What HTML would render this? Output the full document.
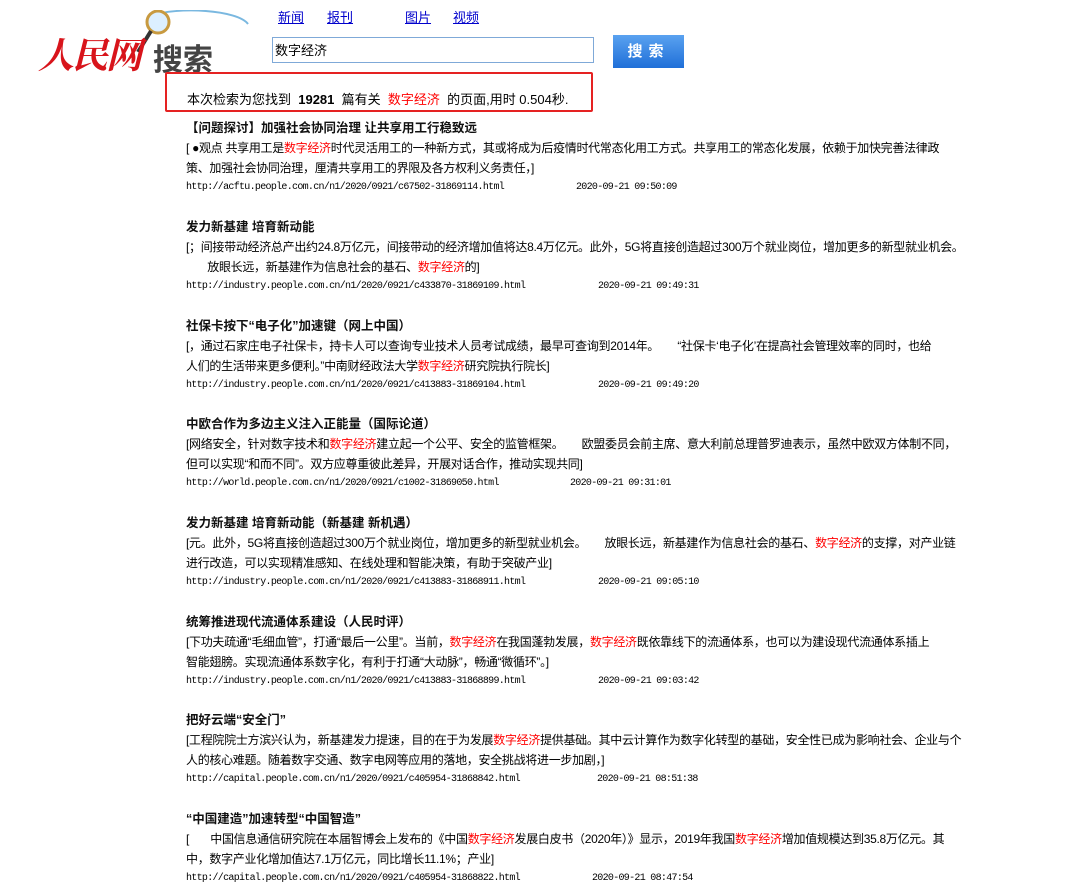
<!DOCTYPE html>
<html><head><meta charset="utf-8"><style>
*{margin:0;padding:0}
body{width:1080px;height:895px;background:#fff;position:relative;overflow:hidden;font-family:"Liberation Sans","Noto Sans CJK SC",sans-serif;font-size:12px;color:#000}
.a{position:absolute}
.nav a{color:#00c;text-decoration:underline;font-size:13px;position:absolute;top:7px}
.it{position:absolute;left:186px;width:800px}
.t{font-weight:bold;font-size:12.5px;line-height:16px;color:#111;height:18px}
.d{line-height:20px;font-size:12px;white-space:nowrap;letter-spacing:-0.3px}
.r{color:#f00}
.u{font-family:"Liberation Mono",monospace;font-size:10px;letter-spacing:-0.7px;line-height:20px;position:relative;white-space:nowrap}
.u span{position:absolute;top:0}
</style></head><body>
<div class="a" style="left:38px;top:10px;width:212px;height:65px">
<svg width="212" height="65" viewBox="0 0 212 65">
<path d="M112 6 C140 -4 200 0 210 14" stroke="#7ab8e0" stroke-width="2" fill="none"/>
<circle cx="120" cy="12" r="11" fill="#dcefff" stroke="#c89a40" stroke-width="3"/>
<line x1="113" y1="21" x2="100" y2="42" stroke="#333" stroke-width="4"/>
<text x="0" y="58" font-family="Liberation Serif,Noto Serif CJK SC,serif" font-size="36" font-style="italic" font-weight="bold" fill="#d8141b" textLength="104">人民网</text>
<text x="115" y="60" font-family="Liberation Sans,Noto Sans CJK SC,sans-serif" font-size="30" font-weight="bold" fill="#444">搜索</text>
</svg></div>
<div class="nav"><a style="left:278px">新闻</a><a style="left:327px">报刊</a><a style="left:405px">图片</a><a style="left:453px">视频</a></div>
<div class="a" style="left:272px;top:37px;width:322px;height:26px;border:1px solid #7fa9d8;font-size:13px;line-height:26px;padding-left:2px;box-sizing:border-box">数字经济</div>
<div class="a" style="left:613px;top:35px;width:71px;height:33px;background:linear-gradient(#5aa2f0,#1f6fd8);color:#fff;font-size:15px;font-weight:bold;text-align:center;line-height:33px;letter-spacing:6px">搜索</div>
<div class="a" style="left:165px;top:72px;width:428px;height:40px;border:2px solid #e52222;border-radius:2px;box-sizing:border-box"></div>
<div class="a" style="left:187px;top:89px;font-size:13px;white-space:nowrap">本次检索为您找到 &nbsp;<b>19281</b>&nbsp; 篇有关 &nbsp;<span class="r">数字经济</span>&nbsp; 的页面,用时 0.504秒.</div>

<div class="it" style="top:120px"><div class="t">【问题探讨】加强社会协同治理 让共享用工行稳致远</div>
<div class="d">[ ●观点 共享用工是<span class="r">数字经济</span>时代灵活用工的一种新方式，其或将成为后疫情时代常态化用工方式。共享用工的常态化发展，依赖于加快完善法律政<br>策、加强社会协同治理，厘清共享用工的界限及各方权利义务责任，]</div>
<div class="u">http://acftu.people.com.cn/n1/2020/0921/c67502-31869114.html<span style="left:390px">2020-09-21 09:50:09</span></div></div>

<div class="it" style="top:219px"><div class="t">发力新基建 培育新动能</div>
<div class="d">[；间接带动经济总产出约24.8万亿元，间接带动的经济增加值将达8.4万亿元。此外，5G将直接创造超过300万个就业岗位，增加更多的新型就业机会。<br>&nbsp;&nbsp;&nbsp;&nbsp;&nbsp;&nbsp;&nbsp;放眼长远，新基建作为信息社会的基石、<span class="r">数字经济</span>的]</div>
<div class="u">http://industry.people.com.cn/n1/2020/0921/c433870-31869109.html<span style="left:412px">2020-09-21 09:49:31</span></div></div>

<div class="it" style="top:318px"><div class="t">社保卡按下“电子化”加速键（网上中国）</div>
<div class="d">[，通过石家庄电子社保卡，持卡人可以查询专业技术人员考试成绩，最早可查询到2014年。&nbsp;&nbsp;&nbsp;&nbsp;&nbsp;&nbsp;“社保卡‘电子化’在提高社会管理效率的同时，也给<br>人们的生活带来更多便利。”中南财经政法大学<span class="r">数字经济</span>研究院执行院长]</div>
<div class="u">http://industry.people.com.cn/n1/2020/0921/c413883-31869104.html<span style="left:412px">2020-09-21 09:49:20</span></div></div>

<div class="it" style="top:416px"><div class="t">中欧合作为多边主义注入正能量（国际论道）</div>
<div class="d">[网络安全，针对数字技术和<span class="r">数字经济</span>建立起一个公平、安全的监管框架。&nbsp;&nbsp;&nbsp;&nbsp;&nbsp;&nbsp;欧盟委员会前主席、意大利前总理普罗迪表示，虽然中欧双方体制不同，<br>但可以实现“和而不同”。双方应尊重彼此差异，开展对话合作，推动实现共同]</div>
<div class="u">http://world.people.com.cn/n1/2020/0921/c1002-31869050.html<span style="left:384px">2020-09-21 09:31:01</span></div></div>

<div class="it" style="top:515px"><div class="t">发力新基建 培育新动能（新基建 新机遇）</div>
<div class="d">[元。此外，5G将直接创造超过300万个就业岗位，增加更多的新型就业机会。&nbsp;&nbsp;&nbsp;&nbsp;&nbsp;&nbsp;放眼长远，新基建作为信息社会的基石、<span class="r">数字经济</span>的支撑，对产业链<br>进行改造，可以实现精准感知、在线处理和智能决策，有助于突破产业]</div>
<div class="u">http://industry.people.com.cn/n1/2020/0921/c413883-31868911.html<span style="left:412px">2020-09-21 09:05:10</span></div></div>

<div class="it" style="top:614px"><div class="t">统筹推进现代流通体系建设（人民时评）</div>
<div class="d">[下功夫疏通“毛细血管”，打通“最后一公里”。当前，<span class="r">数字经济</span>在我国蓬勃发展，<span class="r">数字经济</span>既依靠线下的流通体系，也可以为建设现代流通体系插上<br>智能翅膀。实现流通体系数字化，有利于打通“大动脉”，畅通“微循环”。]</div>
<div class="u">http://industry.people.com.cn/n1/2020/0921/c413883-31868899.html<span style="left:412px">2020-09-21 09:03:42</span></div></div>

<div class="it" style="top:712px"><div class="t">把好云端“安全门”</div>
<div class="d">[工程院院士方滨兴认为，新基建发力提速，目的在于为发展<span class="r">数字经济</span>提供基础。其中云计算作为数字化转型的基础，安全性已成为影响社会、企业与个<br>人的核心难题。随着数字交通、数字电网等应用的落地，安全挑战将进一步加剧，]</div>
<div class="u">http://capital.people.com.cn/n1/2020/0921/c405954-31868842.html<span style="left:411px">2020-09-21 08:51:38</span></div></div>

<div class="it" style="top:811px"><div class="t">“中国建造”加速转型“中国智造”</div>
<div class="d">[&nbsp;&nbsp;&nbsp;&nbsp;&nbsp;&nbsp;&nbsp;中国信息通信研究院在本届智博会上发布的《中国<span class="r">数字经济</span>发展白皮书（2020年）》显示，2019年我国<span class="r">数字经济</span>增加值规模达到35.8万亿元。其<br>中，数字产业化增加值达7.1万亿元，同比增长11.1%；产业]</div>
<div class="u">http://capital.people.com.cn/n1/2020/0921/c405954-31868822.html<span style="left:406px">2020-09-21 08:47:54</span></div></div>
</body></html>
